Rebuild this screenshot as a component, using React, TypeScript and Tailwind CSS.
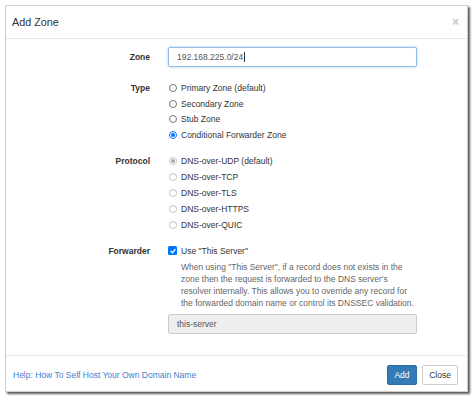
import React from 'react';

const Radio: React.FC<{ checked?: boolean; disabled?: boolean; label: string; h?: string }> = ({ checked, disabled, label, h = 'h-[15.7px]' }) => {
  const ring = disabled ? 'border-[#c4c4c4]' : checked ? 'border-[#0075ff]' : 'border-[#767676]';
  const dot = disabled ? 'bg-[#a8a8a8]' : 'bg-[#0075ff]';
  return (
    <div className={`flex items-center ${h}`}>
      <span className={`ml-[1px] flex h-[8px] w-[8px] items-center justify-center rounded-full border bg-white ${ring}`}>
        {checked && <span className={`h-[4px] w-[4px] rounded-full ${dot}`} />}
      </span>
      <span className="ml-[4px] text-[#333]">{label}</span>
    </div>
  );
};

const Row: React.FC<{ label: string; top: string; children: React.ReactNode }> = ({ label, top, children }) => (
  <div className="flex">
    <div className={`w-[135px] shrink-0 text-right font-bold text-[#333] ${top}`}>{label}</div>
    <div className="ml-[18px] w-[249px]">{children}</div>
  </div>
);

export default function App() {
  return (
    <div className="h-[398px] w-[474px] bg-white pl-[5px] pt-[5px]" style={{ fontFamily: '"Liberation Sans", Arial, sans-serif' }}>
      <div className="w-[463px] border border-[#cfcfcf] bg-white text-[8.5px] leading-[12px] shadow-[2px_2px_2px_rgba(0,0,0,0.65)]">
        {/* header */}
        <div className="flex h-[33px] items-center justify-between border-b border-[#e5e5e5] pb-[1px] pl-[6px] pr-[8px]">
          <h4 className="text-[10.8px] text-[#333]">Add Zone</h4>
          <span className="text-[12px] font-bold leading-none text-[#c8c8c8]">×</span>
        </div>

        {/* body */}
        <div className="pb-[21px] pl-[9px] pt-[8px]">
          <Row label="Zone" top="pt-[4px]">
            <div className="flex h-[20px] items-center rounded-[2px] border border-[#8fbce6] pl-[8px] text-[#555] shadow-[0_0_3px_rgba(102,175,233,0.6)]">
              192.168.225.0/24
              <span className="ml-[1px] h-[10px] w-px bg-[#333]" />
            </div>
          </Row>

          <div className="mt-[13px]">
            <Row label="Type" top="pt-[2px]">
              <Radio label="Primary Zone (default)" />
              <Radio label="Secondary Zone" />
              <Radio label="Stub Zone" />
              <Radio checked label="Conditional Forwarder Zone" />
            </Row>
          </div>

          <div className="mt-[10px]">
            <Row label="Protocol" top="pt-[2px]">
              <Radio disabled checked h="h-[16px]" label="DNS-over-UDP (default)" />
              <Radio disabled h="h-[16px]" label="DNS-over-TCP" />
              <Radio disabled h="h-[16px]" label="DNS-over-TLS" />
              <Radio disabled h="h-[16px]" label="DNS-over-HTTPS" />
              <Radio disabled h="h-[16px]" label="DNS-over-QUIC" />
            </Row>
          </div>

          <div className="mt-[12px]">
            <Row label="Forwarder" top="pt-[0px]">
              <div className="flex h-[12px] items-center">
                <span className="flex h-[9px] w-[9px] items-center justify-center rounded-[1.5px] bg-[#0075ff]">
                  <svg viewBox="0 0 10 10" className="h-[8px] w-[8px]">
                    <path d="M2 5.2 L4.1 7.2 L8 2.8" fill="none" stroke="white" strokeWidth="1.6" />
                  </svg>
                </span>
                <span className="ml-[4px] text-[#333]">Use &quot;This Server&quot;</span>
              </div>
              <p className="mt-[4px] whitespace-nowrap pl-[13px] text-[#666]">
                When using &quot;This Server&quot;, if a record does not exists in the
                <br />
                zone then the request is forwarded to the DNS server&apos;s
                <br />
                resolver internally. This allows you to override any record for
                <br />
                the forwarded domain name or control its DNSSEC validation.
              </p>
              <div className="mt-[5px] flex h-[20px] items-center rounded-[2px] border border-[#ccc] bg-[#eee] pl-[8px] text-[#555]">
                this-server
              </div>
            </Row>
          </div>
        </div>

        {/* footer */}
        <div className="flex items-center justify-between border-t border-[#e5e5e5] pb-[6px] pl-[7px] pr-[9px] pt-[9px]">
          <a className="text-[#3d7fd0]">Help: How To Self Host Your Own Domain Name</a>
          <div className="flex gap-[5px]">
            <button className="h-[20px] w-[30px] rounded-[2px] border border-[#2e6da4] bg-[#337ab7] text-white">Add</button>
            <button className="h-[20px] w-[36px] rounded-[2px] border border-[#ccc] bg-white text-[#333]">Close</button>
          </div>
        </div>
      </div>
    </div>
  );
}
